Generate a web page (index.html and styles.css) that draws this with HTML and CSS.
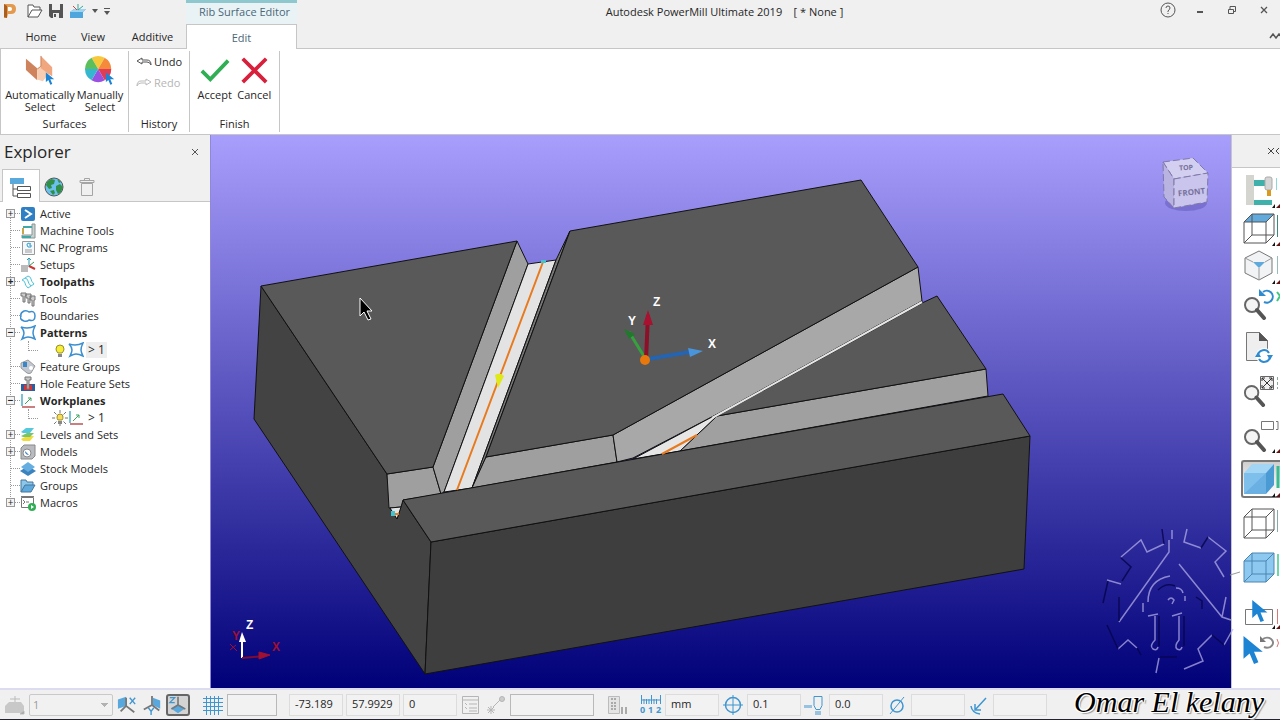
FILE: index.html
```html
<!DOCTYPE html>
<html lang="en">
  <head>
    <meta charset="UTF-8" />
    <meta name="viewport" content="width=device-width, initial-scale=1.0" />
    <title>Autodesk PowerMill Ultimate 2019</title>
    <link rel="stylesheet" href="styles.css">
  </head>

  <body>
    <svg width="0" height="0" class="defs" aria-hidden="true">
      <symbol id="pointer" viewBox="0 0 12 16">
        <path d="M0 0v13l3.500-3 2.500 6 2.500-1-2.500-6h5z" fill="#1d84d4" />
      </symbol>
      <symbol id="wire" viewBox="0 0 32 32">
        <path d="M1 10h22v21H1zM1 10l8-8h22l-8 8M31 2v21l-8 8M9 2v21h22M9 23l-8 8" fill="none" stroke="currentColor" />
      </symbol>
      <symbol id="lens" viewBox="0 0 24 24">
        <circle cx="9" cy="9" r="7" fill="#f4f4f4" stroke="#666" stroke-width="2" />
        <path d="M14 14l7 8" stroke="#555" stroke-width="4" stroke-linecap="round" />
      </symbol>
      <symbol id="star" viewBox="0 0 16 16">
        <path d="M1 2q3 1 6 1 4 0 8-2-2 4-2 7 0 2 2 6-4-2-7-2-2 0-6 2 2-4 2-6 0-3-3-6z" fill="#fff" stroke="#3b8fd0" stroke-width="1.500" />
      </symbol>
      <symbol id="plane" viewBox="0 0 16 16">
        <path d="M2 1v12" stroke="#4bb0c4" stroke-width="1.500" />
        <path d="M2 14h13" stroke="#b55" stroke-width="1.500" />
        <path d="M5 11l6-6M8 5h3v3" fill="none" stroke="#3aa35c" />
      </symbol>
      <symbol id="more" viewBox="0 0 8 4">
        <path d="M3 0v4H0z" fill="#111" />
        <path d="M8 0v4H4z" fill="#611" />
      </symbol>
    </svg>

    <header>
      <div class="titlebar">
        <div class="quick">
          <svg class="logo" viewBox="0 0 16 16"><path d="M2 1h7q5 0 5 5t-5 5H6l-1 4H2z" fill="#e39a4e" /><path d="M6 4h2q2 0 2 2T8 8H6z" fill="#fff" /><path d="M2 1l3 2v12l-3-1z" fill="#a95f20" /></svg>
          <button type="button" aria-label="Open"><svg width="16" height="16" viewBox="0 0 16 16" fill="#fff" stroke="#555"><path d="M1 14V2h5l1 2h6v3M1 14L5 7h10l-4 7z" /></svg></button>
          <button type="button" aria-label="Save"><svg width="16" height="16" viewBox="0 0 16 16"><path d="M1 1h14v14H3l-2-2z" fill="#555" /><path d="M4 1h8v6H4zM5 10h6v5H5z" fill="#eee" /><path d="M6 11h2v3H6z" fill="#555" /></svg></button>
          <button type="button" aria-label="Block"><svg width="18" height="16" viewBox="0 0 18 16"><path d="M1 9l4-3h12l-3 3v6H1z" fill="#4ea6dc" /><path d="M1 9h13l3-3H5z" fill="#9fd3f0" /><path d="M9 7V1M9 7l5-4" stroke="#3a9" /><path d="M4 3l4 4" stroke="#c44" /></svg></button>
          <svg width="6" height="4" viewBox="0 0 6 4"><path d="M0 0h6L3 4z" fill="#555" /></svg>
          <svg class="customize" width="6" height="7" viewBox="0 0 6 7"><path d="M0 0h6v1H0zM0 3h6L3 7z" fill="#555" /></svg>
        </div>
        <div class="context">Rib Surface Editor</div>
        <h1>Autodesk PowerMill Ultimate 2019 &nbsp;&nbsp; [ * None ]</h1>
        <div class="window-buttons">
          <button type="button" aria-label="Help"><svg width="16" height="16" viewBox="0 0 16 16"><circle cx="8" cy="8" r="7" fill="none" stroke="#555" /><path d="M6 6q0-2 2-2t2 2q0 1-2 3v1M8 11v1" fill="none" stroke="#555" /></svg></button>
          <button type="button" aria-label="Minimize"><svg width="8" height="8" viewBox="0 0 8 8"><path d="M1 6h6" stroke="#555" stroke-width="2" /></svg></button>
          <button type="button" aria-label="Restore"><svg width="8" height="8" viewBox="0 0 8 8" fill="none" stroke="#555"><path d="M.5 3.500h5v4h-5zM2 3V.5h5.500v5H6" /></svg></button>
          <button type="button" aria-label="Close"><svg width="8" height="8" viewBox="0 0 8 8"><path d="M1 1l6 6M7 1L1 7" stroke="#555" stroke-width="1.300" /></svg></button>
        </div>
      </div>
      <nav class="tabs">
        <button type="button">Home</button>
        <button type="button">View</button>
        <button type="button">Additive</button>
        <button type="button" class="active">Edit</button>
        <svg class="collapse" width="11" height="6" viewBox="0 0 11 6"><path d="M1 5l3-4 3 4 3-4 1 2" fill="none" stroke="#555" stroke-width="1.500" /></svg>
      </nav>
    </header>

    <section class="ribbon">
      <div class="group surfaces">
        <div class="commands">
          <button type="button">
            <svg viewBox="0 0 32 32"><path d="M1 4l12 10v13L1 16z" fill="#cf835c" /><path d="M13 15l5-4 11 5-10 12-6-2z" fill="#f6cdb2" /><path d="M17 1l12 12v10L17 14z" fill="#f0a67f" /><path d="M17 1v11l-4 3" fill="none" stroke="#c98058" /><use href="#pointer" x="22" y="18" width="10" height="14" /></svg>
            Automatically Select
          </button>
          <button type="button">
            <svg viewBox="0 0 32 32"><g transform="translate(14 15)"><path d="M0 0L-7-12A14 14 0 0 1 7-12z" fill="#f8c83c" /><path d="M0 0L7-12A14 14 0 0 1 14 0z" fill="#f58a3a" /><path d="M0 0h14A14 14 0 0 1 7 12z" fill="#e23c55" /><path d="M0 0l7 12A14 14 0 0 1-7 12z" fill="#9a50e0" /><path d="M0 0l-7 12A14 14 0 0 1-14 0z" fill="#35b8cf" /><path d="M0 0h-14A14 14 0 0 1-7-12z" fill="#5cbf5c" /></g><use href="#pointer" x="22" y="18" width="10" height="14" /></svg>
            Manually Select
          </button>
        </div>
        <h2>Surfaces</h2>
      </div>
      <div class="group history">
        <div class="commands">
          <button type="button"><svg viewBox="0 0 16 10"><path d="M1 4l5-3v2h5q4 0 4 5-1-3-4-3H6v2z" fill="#fff" stroke="#555" /></svg>Undo</button>
          <button type="button" disabled><svg viewBox="0 0 16 10"><path d="M15 4l-5-3v2H5Q1 3 1 8q1-3 4-3h5v2z" fill="#fff" stroke="#bbb" /></svg>Redo</button>
        </div>
        <h2>History</h2>
      </div>
      <div class="group finish">
        <div class="commands">
          <button type="button"><svg viewBox="0 0 32 32"><path d="M2 17l9 9L30 6" fill="none" stroke="#2fae54" stroke-width="4" /></svg>Accept</button>
          <button type="button"><svg viewBox="0 0 32 32"><path d="M4 4l25 25M29 4L4 29" stroke="#d8203c" stroke-width="4" /></svg>Cancel</button>
        </div>
        <h2>Finish</h2>
      </div>
    </section>

    <main>
      <aside class="explorer">
        <div class="explorer-head">
          <h2>Explorer</h2>
          <button type="button" aria-label="Close explorer"><svg width="8" height="8" viewBox="0 0 8 8"><path d="M1 1l6 6M7 1L1 7" stroke="#555" /></svg></button>
        </div>
        <div class="explorer-tabs">
          <button type="button" class="active" aria-label="Tree"><svg width="22" height="22" viewBox="0 0 22 22"><path d="M0 1h14v6H0z" fill="#5aa9dc" /><path d="M3 7v12h4M3 12h4M7.500 9.500h13v4h-13zM7.500 16.500h13v4h-13z" fill="none" stroke="#555" /></svg></button>
          <button type="button" aria-label="Web"><svg width="20" height="20" viewBox="0 0 20 20"><circle cx="10" cy="10" r="9" fill="#6cc0ee" stroke="#555" /><path d="M3 5l4-3 4 1-1 4-3 1 1 3-3 1-3-4zM12 9l4-2 3 3-2 5-3 2-2-4zM6 14l4-1 1 3-2 2zM13 2l4 3-2 1z" fill="#2f8f46" /></svg></button>
          <button type="button" aria-label="Recycle bin"><svg width="16" height="20" viewBox="0 0 16 20" fill="none" stroke="#a5a5a5"><path d="M2.500 6.500h11v12h-11zM1 3.500h14v2H1zM5.500 3V1.500h5V3" /></svg></button>
        </div>

        <ul class="tree">
          <li><button type="button" class="twig" aria-label="Expand">+</button>
            <svg viewBox="0 0 16 16"><rect x="1" y="1" width="14" height="14" rx="2" fill="#2f7fc4" /><path d="M5 4l6 4-6 4" fill="none" stroke="#fff" stroke-width="2" /></svg>Active</li>
          <li><svg viewBox="0 0 16 16"><path d="M12 1h3v14H2v-3h10z" fill="#c9d0d0" stroke="#8a9494" /><path d="M3 3h9v2H3z" fill="#3fa9a5" /><path d="M3 5v6" stroke="#c9a54a" stroke-width="2" /><path d="M2 13h9v2H2z" fill="#3fa9a5" /></svg>Machine Tools</li>
          <li><svg viewBox="0 0 16 16"><path d="M2.500 1.500h12v13h-12z" fill="#f4f8fa" stroke="#999" /><path d="M11 4q-4-2-4 1t4 2V5H9" fill="none" stroke="#2e9bd0" /><path d="M5 10h7M5 12h7" stroke="#999" /></svg>NC Programs</li>
          <li><svg viewBox="0 0 16 16"><path d="M1 8h7v7H1z" fill="#bbb" /><path d="M9 10V1M7 3l2-2 2 2" fill="none" stroke="#2e9bb0" /><path d="M9 9l5-4" stroke="#3a9a4a" /><path d="M9 9l6 3" stroke="#c33" stroke-width="2" /></svg>Setups</li>
          <li class="bold"><button type="button" class="twig" aria-label="Expand">+</button>
            <svg viewBox="0 0 16 16"><path d="M2 6q3 1 3 3t3 5M5 4q3 1 3 3t3 5M8 2q3 1 3 3t3 5M2 6l6-4M8 14l6-4" fill="none" stroke="#4cc4d8" /></svg>Toolpaths</li>
          <li><svg viewBox="0 0 16 16" fill="#ccc" stroke="#777"><path d="M1 2h5v3H5v6H3V5H1zM6 3h5v4h-1v5H8V7H6zM10 5h5v4h-1v6h-2V9h-2z" /></svg>Tools</li>
          <li><svg viewBox="0 0 16 16"><path d="M4 3q3-1 5 1 6-2 6 4t-6 4q-2 2-5 1-5-2-3-5-1-3 3-5z" fill="#fff" stroke="#3b8fd0" stroke-width="1.500" /></svg>Boundaries</li>
          <li class="bold"><button type="button" class="twig" aria-label="Collapse">−</button>
            <svg><use href="#star" /></svg>Patterns</li>
          <li class="child"><svg viewBox="0 0 16 16"><path d="M8 3q4 0 4 4 0 2-2 4H6Q4 9 4 7q0-4 4-4z" fill="#f7ee3a" stroke="#998d28" /><path d="M6 12h4v3H6z" fill="#888" /></svg><svg><use href="#star" /></svg><span class="current">&gt; 1</span></li>
          <li><svg viewBox="0 0 16 16"><path d="M1 4l7-3 7 6-4 7q-2 1-4 0L1 9z" fill="#c3c8d0" stroke="#999" /><path d="M3 3h4v5H3z" fill="#3c86c8" /><circle cx="11" cy="9" r="2" fill="#fff" /></svg>Feature Groups</li>
          <li><svg viewBox="0 0 16 16"><path d="M1 8h14v7H1z" fill="#2e5e9e" /><path d="M4 9h8v5H4z" fill="#d33" /><path d="M5 1h6v3H9v9H7V4H5z" fill="#c8c8c8" stroke="#777" /></svg>Hole Feature Sets</li>
          <li class="bold"><button type="button" class="twig" aria-label="Collapse">−</button>
            <svg><use href="#plane" /></svg>Workplanes</li>
          <li class="child"><svg viewBox="0 0 16 16"><path d="M8 0v16M0 8h16M2 2l12 12M14 2L2 14" stroke="#777" /><circle cx="8" cy="8" r="5" fill="#fff" /><path d="M8 4q3 0 3 3 0 2-1 3H6Q5 9 5 7q0-3 3-3z" fill="#f7dd5a" stroke="#998d28" /><path d="M6 11h4v3H6z" fill="#888" /></svg><svg><use href="#plane" /></svg><span class="current plain">&gt; 1</span></li>
          <li><button type="button" class="twig" aria-label="Expand">+</button>
            <svg viewBox="0 0 16 16"><path d="M1 12l6-3h7l-4 5H3z" fill="#f0dc3c" /><path d="M1 9l6-3h7l-4 4H3z" fill="#7cc46a" /><path d="M1 5l5-4h8l-4 5H3z" fill="#56c8dc" /></svg>Levels and Sets</li>
          <li><button type="button" class="twig" aria-label="Expand">+</button>
            <svg viewBox="0 0 16 16"><path d="M1 4l3-3h11v11l-3 3H1z" fill="#b8bcc0" stroke="#888" /><circle cx="7" cy="9" r="4" fill="#fff" stroke="#888" /><path d="M5 7q0 4 4 4z" fill="#3c86c8" /></svg>Models</li>
          <li><svg viewBox="0 0 16 16"><path d="M8 5l8 5-8 5-8-5z" fill="#3b83bf" /><path d="M8 1l7 5-7 5-7-5z" fill="#66aee0" /></svg>Stock Models</li>
          <li><svg viewBox="0 0 16 16"><path d="M1 14V2h5l1 2h6v3" fill="#8cc6ea" stroke="#46779c" /><path d="M1 14l4-7h10l-4 7z" fill="#5fa9dc" stroke="#46779c" /></svg>Groups</li>
          <li><button type="button" class="twig" aria-label="Expand">+</button>
            <svg viewBox="0 0 16 16"><path d="M1.500 2.500h12v10h-12zM1 1.500h13M3 5l2 2-2 2M6 7h3" fill="none" stroke="#777" /><circle cx="12" cy="12" r="4" fill="#2fae54" /><path d="M11 10l3 2-3 2z" fill="#fff" /></svg>Macros</li>
        </ul>
      </aside>

      <section class="viewport">
        <svg class="scene" viewBox="211 135 1020 553" preserveAspectRatio="xMidYMid slice">
          <g stroke="#111" stroke-linejoin="round">
            <!-- block sides -->
            <path d="M261 286L254 419 425 674 431 542 403 500 397 519 390 508 387 474z" fill="#434343" />
            <path d="M431 542L1030 436 1024 569 425 674z" fill="#3e3e3e" />
            <!-- rib walls and floors -->
            <path d="M387 474l46-7 8 27-38 6-2 7-12 1z" fill="#9f9f9f" />
            <path d="M517 241l11 23-84 228-3 2-8-27z" fill="#9f9f9f" />
            <path d="M528 264l28-4-84 228-28 4z" fill="#e3e3e3" />
            <path d="M570 231l-14 29-84 228 14-31z" fill="#777" />
            <path d="M486 457l127-22 4 27-145 26z" fill="#9f9f9f" />
            <path d="M613 435l305-168 4 34-195 108-94 49-16 4z" fill="#a8a8a8" />
            <path d="M717 416l269-47 2 27-308 55z" fill="#a0a0a0" />
            <path d="M922 303l15-7 49 73-269 47z" fill="#595959" />
            <path d="M633 459l94-50 195-108v2L717 416l-37 35z" fill="#e6e6e6" />
            <path d="M390 508l11-1-4 12z" fill="#e3e3e3" />
            <!-- top faces -->
            <path d="M261 286l256-45-84 226-46 7z" fill="#595959" />
            <path d="M570 231l291-51 57 87-305 168-127 22z" fill="#595959" />
            <path d="M403 500l600-106 27 42-599 106z" fill="#595959" />
          </g>
          <path d="M712 418L922 302" stroke="#e6e6e6" stroke-width="2" />
          <g stroke="#e87a1e" stroke-width="2">
            <path d="M543 262l-86 228M662 454l35-19M392 514h7" />
          </g>
          <path d="M541 260h5v3h-5zM391 511h4v5h-4z" fill="#3fc4d0" />
          <path d="M495 375q5-3 9 1l-6 12z" fill="#dfe818" />
          <!-- active workplane -->
          <path d="M645 358l-16-26" stroke="#35a23e" stroke-width="3" />
          <path d="M624 329l11 5-6 5z" fill="#1f7a2c" />
          <path d="M646 360l2-45" stroke="#8c1028" stroke-width="4" />
          <path d="M648 310l5 15h-10z" fill="#a81230" />
          <path d="M648 359l42-7" stroke="#2464b0" stroke-width="4" />
          <path d="M688 348l15 3-13 6z" fill="#4a94dc" />
          <circle cx="645" cy="360" r="5" fill="#e8780c" />
          <g class="axis-text">
            <text x="653" y="306">Z</text>
            <text x="628" y="325">Y</text>
            <text x="708" y="348">X</text>
          </g>
          <path d="M360 298v18l4-4 4 8 3-1-4-8h5z" fill="#000" stroke="#fff" />
        </svg>

        <svg class="triad" width="60" height="50" viewBox="0 0 60 50">
          <path d="M12 40V22" stroke="#fff" stroke-width="2" />
          <path d="M12 14l4 10H9z" fill="#fff" />
          <path d="M12 40l22-2" stroke="#7c0c34" stroke-width="2" />
          <path d="M29 34l11 3-11 4zM0 26l7 7M0 32l6-5" fill="#a01030" stroke="#a01030" />
          <text x="16" y="11" fill="#fff">Z</text>
          <text x="2" y="22" fill="#a01030">Y</text>
          <text x="42" y="33" fill="#a01030">X</text>
        </svg>

        <svg class="cube" width="56" height="60" viewBox="0 0 56 60">
          <ellipse cx="27" cy="48" rx="21" ry="8" fill="#4b3fa0" opacity=".35" />
          <g stroke="#807aa8" stroke-dasharray="7 3">
            <path d="M4 7l30-4 15 15-34 6z" fill="#d2cff0" />
            <path d="M4 7l11 17v29L5 42z" fill="#b9b3e2" />
            <path d="M15 24l34-6-1 29-33 6z" fill="#c9c5ec" />
          </g>
          <text class="top" x="20" y="15" transform="rotate(-4 28 12)">TOP</text>
          <text x="19" y="40" transform="rotate(-6 32 38)">FRONT</text>
        </svg>
      </section>

      <aside class="toolbar">
        <div class="toolbar-head"><svg width="12" height="8" viewBox="0 0 12 8"><path d="M0 1l6 6M6 1L0 7M11 1L8 4l3 3" fill="none" stroke="#444" /></svg></div>
        <div class="tools">
          <button type="button" class="short" aria-label="Machine"><svg viewBox="0 0 37 36"><path d="M3 3h8v30H3z" fill="#d5d5d0" /><path d="M11 8h12v6H11zM11 28h18v5H11z" fill="#3fb0aa" /><rect x="22" y="5" width="7" height="13" rx="2" fill="#d5d5d5" stroke="#aaa" /><path d="M24 18h4v6h-4z" fill="#d99a22" /><path d="M33.500 6v12" stroke="#8ed8d8" /><use href="#more" x="29" y="32" width="8" height="4" /></svg></button>
          <button type="button" class="short" aria-label="View from top"><svg viewBox="0 0 37 36"><path d="M1 12l8-8h22l-8 8z" fill="#62aadc" /><g color="#555"><use href="#wire" y="2" width="32" height="32" /></g><path d="M34.500 5v22" stroke="#3a8a84" /><use href="#more" x="29" y="32" width="8" height="4" /></svg></button>
          <button type="button" class="short" aria-label="Isometric view"><svg viewBox="0 0 37 36"><path d="M16 3l13 7v15l-13 7-14-7V10z" fill="#f1f3f5" stroke="#777" /><path d="M2 10l8 4M29 10l-7 4M16 20v12" stroke="#999" /><path d="M10 14h12l-6 6z" fill="#5fa9dc" /><path d="M34.500 8v18" stroke="#9bb" /><use href="#more" x="29" y="32" width="8" height="4" /></svg></button>
          <button type="button" class="short" aria-label="Previous zoom"><svg viewBox="0 0 37 36"><use href="#lens" x="0" y="10" width="24" height="24" /><path d="M20 6a6 6 0 1 1 1 10" fill="none" stroke="#2e8bd0" stroke-width="2" /><path d="M16 3v7h7z" fill="#2e8bd0" /><path d="M34 6l3 4-3 5" fill="none" stroke="#3dc880" stroke-width="2" /></svg></button>
          <div class="spacer"></div>
          <button type="button" aria-label="Refresh"><svg viewBox="0 0 37 36"><path d="M3.500 3.500h13l8 8v20h-21z" fill="#eee" stroke="#777" /><path d="M16 3v9h9z" fill="#555" /><circle cx="21" cy="27" r="8" fill="#fff" /><path d="M15 26a6 6 0 0 1 11-2M27 28a6 6 0 0 1-11 2" fill="none" stroke="#2e8bd0" stroke-width="2" /><path d="M12 28h6l-3-5zM24 26h6l-3 5z" fill="#2e8bd0" /></svg></button>
          <button type="button" aria-label="Zoom to fit"><svg viewBox="0 0 37 36"><use href="#lens" x="0" y="11" width="23" height="23" /><path d="M17.500 3.500h13v13h-13z" fill="#eee" stroke="#666" /><path d="M19 5l10 10M29 5L19 15M19 8V5h3M26 5h3v3M29 12v3h-3M22 15h-3v-3" fill="none" stroke="#333" /><path d="M34.500 4v12" stroke="#8a9" stroke-dasharray="3 2" /></svg></button>
          <button type="button" aria-label="Zoom box"><svg viewBox="0 0 37 36"><use href="#lens" x="0" y="11" width="24" height="24" /><path d="M18.500 4.500h12v8h-12zM33 4.500h2v8h-2" fill="#fff" stroke="#777" /><use href="#more" x="29" y="32" width="8" height="4" /></svg></button>
          <button type="button" class="pressed" aria-label="Plain shading"><svg viewBox="0 0 37 36"><path d="M1 12h22v21H1z" fill="#7fbfeb" /><path d="M1 12l8-9h22l-8 9z" fill="#a3d5f5" /><path d="M31 3v21l-8 9V12z" fill="#4a9ad4" /><path d="M1 33l22-21v21z" fill="#6ab0e2" /><path d="M35 5v22" stroke="#35bd91" stroke-width="3" /><use href="#more" x="29" y="32" width="8" height="4" /></svg></button>
          <button type="button" aria-label="Wireframe"><svg viewBox="0 0 37 36"><g color="#555"><use href="#wire" y="2" width="32" height="32" /></g><path d="M34.500 5v22" stroke="#8aa" /></svg></button>
          <button type="button" aria-label="Transparent"><svg viewBox="0 0 37 36"><path d="M1 12l8-8h22v21l-8 8H1z" fill="#8cc8f0" /><g color="#4a86b0"><use href="#wire" y="2" width="32" height="32" /></g><path d="M35 5v22" stroke="#6ad8a8" stroke-width="2" /></svg></button>
          <button type="button" aria-label="Select by box"><svg viewBox="0 0 37 36"><path d="M2.500 16.500h27v15h-27z" fill="none" stroke="#777" /><use href="#pointer" x="9" y="7" width="17" height="22" /><path d="M34.500 16v15" stroke="#d77" /><use href="#more" x="29" y="32" width="8" height="4" /></svg></button>
          <button type="button" class="short" aria-label="Previous selection"><svg viewBox="0 0 37 36"><use href="#pointer" x="0" y="2" width="22" height="28" /><path d="M20 5a6 5 0 1 1 1 8" fill="none" stroke="#888" stroke-width="2" /><path d="M17 2v6h6z" fill="#777" /><path d="M34 5q3 4 0 8" fill="none" stroke="#d77" /></svg></button>
        </div>
      </aside>
    </main>

    <footer>
      <svg class="wide" viewBox="0 0 22 22"><path d="M1 12l4-4h12l3 4v7H1z" fill="#c8c8c8" /><path d="M11 8V2M6 5h10M20 17v3h-4z" stroke="#bbb" fill="#999" /></svg>
      <select disabled aria-label="Active workplane"><option>1</option></select>
      <button type="button" aria-label="X plane"><svg viewBox="0 0 22 22"><path d="M1 5l9-3v10l-9 3z" fill="#58a8de" /><path d="M10 3v9l9 7M10 12l-6 6" fill="none" stroke="#777" stroke-width="2" /><path d="M14 3l6 7M20 3l-6 7" stroke="#3f96d0" stroke-width="1.500" /></svg></button>
      <button type="button" aria-label="Y plane"><svg viewBox="0 0 22 22"><path d="M12 3l8 3v9l-8-4z" fill="#58a8de" /><path d="M11 1v10l-9 5M11 11l8 6" fill="none" stroke="#777" stroke-width="2" /><path d="M7 14l3 4 3-4M10 18v4" fill="none" stroke="#3f96d0" stroke-width="1.500" /></svg></button>
      <button type="button" class="pressed" aria-label="Z plane"><svg viewBox="0 0 22 22"><path d="M11 10l9 5-9 6-9-6z" fill="#58a8de" /><path d="M11 1v10l9 5M11 11l-8 5" fill="none" stroke="#777" stroke-width="2" /><path d="M1 2h6L1 8h6" fill="none" stroke="#3f96d0" stroke-width="1.500" /></svg></button>
      <svg class="wide grid-icon" viewBox="0 0 22 22"><path d="M1 4.500h20M1 8.500h20M1 12.500h20M1 16.500h20M4.500 2v19M8.500 2v19M12.500 2v19M16.500 2v19" stroke="#3f96d0" /></svg>
      <input type="text" class="w50" aria-label="Grid size" />
      <output class="readout first">-73.189</output>
      <output class="readout">57.9929</output>
      <output class="readout">0</output>
      <svg class="wide" viewBox="0 0 22 22" fill="none" stroke="#b5b5b5"><path d="M2.500 2.500h16v17h-16zM2 6h17M5 9l2 2M5 13l2 2M9 10h8M9 14h8M9 17h8" /></svg>
      <svg class="wide" viewBox="0 0 22 22" fill="none" stroke="#b5b5b5"><path d="M8 13l7-7M2 16h8M6 12v8M3 13l6 6M9 13l-6 6" /><circle cx="17" cy="5" r="2.500" fill="#ccc" /></svg>
      <input type="text" class="w84" aria-label="Coordinates" />
      <svg class="wide calc" viewBox="0 0 22 22"><path d="M2.500 2.500h11v17h-11z" fill="#e4e4e4" stroke="#bbb" /><path d="M5 5h6M5 9h6M5 12h6M5 15h6" stroke="#aaa" stroke-dasharray="2 1" stroke-width="2" /><path d="M15 13h2v7h-2zM19 13h2v7h-2z" fill="#aaa" /></svg>
      <svg class="wide ruler" viewBox="0 0 22 22"><path d="M1.500 1v9M11.500 1v9M20.500 1v9M4 5v5M6.500 5v5M9 5v5M14 5v5M16.500 5v5M1 6h20" stroke="#3f96d0" /><text x="0" y="19">0</text><text x="8" y="19">1</text><text x="16" y="19">2</text></svg>
      <output class="readout">mm</output>
      <svg class="wide" viewBox="0 0 22 22" fill="none" stroke="#3f96d0"><circle cx="11" cy="11" r="7.500" stroke-width="1.500" /><path d="M1 11h20M11 1v20" /></svg>
      <output class="readout">0.1</output>
      <svg class="wide" viewBox="0 0 22 22" fill="none" stroke="#3f96d0"><path d="M10 2.500h8v9l-2 4h-4l-2-4zM12 17v4M14 17v4M16 17v4M1 11v3M3 11v3M5 11v3M7 11v3" /></svg>
      <output class="readout">0.0</output>
      <svg class="wide" viewBox="0 0 22 22" fill="none" stroke="#3f96d0"><circle cx="11" cy="12" r="6" stroke-width="1.500" /><path d="M4 20L18 3" /></svg>
      <output class="readout"></output>
      <svg class="wide" viewBox="0 0 22 22" fill="none" stroke="#3f96d0"><path d="M18 4L7 16M7 10v6h6M3 12q1 7 9 8" stroke-width="1.500" /></svg>
      <output class="readout"></output>
    </footer>

    <svg class="watermark" width="142" height="150" viewBox="1100 525 142 150" fill="none">
      <g stroke="#b9b4ee" stroke-width="1.500" opacity=".7">
        <path d="M1121 557l20-17 6 12 17-8M1172 530v9M1187 529l-3 13 17 6M1208 537l18 14-11 11 9 15M1107 580l14 4M1169 540v12l-50 70M1179 564l43 53 9 3M1226 597l-4 20M1148 602q0-22 22-26M1143 603v9M1176 588q6 0 7 5M1118 649l10-9 9 8M1159 658l-3 15M1184 669l19-8-5-12 14-14" />
        <path d="M1148 616l10-2M1155 616v24q-6 6-2 9 4 2 5-2M1172 616l10-3M1179 616v24q-5 6-2 9 4 2 5-2M1224 645l9-16" />
        <path d="M1185 596v5M1168 600q3-4 6 0l-2 4" />
      </g>
      <g stroke="#05044a" stroke-width="1.500" opacity=".8">
        <path d="M1121 558l10 9-9 14M1103 603l5-22M1107 625l11 24M1119 597v24M1201 548l7-11M1212 635l12 10M1164 544l-2-15M1137 648l4 7M1160 657h17M1158 590q8-8 17-4M1159 616v30M1184 616v30M1196 597l6 4v8" />
      </g>
      <path d="M1230 575l10-3" stroke="#999" />
    </svg>
    <div class="signature">Omar El kelany</div>
  </body>
</html>
```
FILE: styles.css
```css
:root {
  --panel: #f0f0f0;
  --line: #c6c6c6;
  --text: #262626;
  --blue: #3f96d0;
}

* {
  box-sizing: border-box;
  margin: 0;
  padding: 0;
}

body {
  background-color: white;
  color: var(--text);
  display: flex;
  flex-direction: column;
  font-family: "Open Sans", "Noto Sans", sans-serif;
  font-size: 11px;
  height: 100vh;
  line-height: 12px;
  overflow: hidden;
  position: relative;
}

svg {
  display: block;
  flex: none;
}

.defs {
  position: absolute;
}

button {
  background: none;
  border: none;
  color: inherit;
  font: inherit;
}

h1,
h2 {
  font-size: 11px;
  font-weight: normal;
}

/* title bar and tabs */
header {
  background-color: var(--panel);
  flex: none;
}

.titlebar {
  align-items: center;
  display: flex;
  height: 24px;
}

.quick {
  align-items: center;
  display: flex;
  gap: 5px;
  padding: 0 0 2px 2px;
  width: 186px;
}

.logo {
  height: 16px;
  margin-right: 4px;
  width: 16px;
}

.customize {
  margin-left: 1px;
}

.context {
  background-color: #e9f3f5;
  border-top: 3px solid #8ec8ce;
  color: #49687a;
  height: 24px;
  line-height: 17px;
  padding-left: 6px;
  text-align: center;
  width: 111px;
}

h1 {
  flex: 1;
  padding-right: 8px;
  text-align: center;
}

.window-buttons {
  align-items: center;
  display: flex;
  gap: 16px;
  padding: 0 8px 4px 0;
}

.window-buttons button {
  display: flex;
  justify-content: center;
  min-width: 16px;
}

.tabs {
  border-bottom: 1px solid var(--line);
  display: flex;
  height: 25px;
  padding-left: 15px;
}

.tabs button {
  padding-top: 1px;
  width: 52px;
}

.tabs button:nth-child(3) {
  width: 67px;
}

.tabs .active {
  background-color: white;
  border: 1px solid var(--line);
  border-bottom: none;
  color: #49687a;
  height: 25px;
  width: 111px;
}

.collapse {
  margin: 9px 0 0 auto;
}

/* ribbon */
.ribbon {
  background-color: white;
  border-bottom: 1px solid var(--line);
  border-left: 1px solid var(--line);
  display: flex;
  flex: none;
  height: 86px;
  padding: 2px 0;
}

.group {
  border-right: 1px solid var(--line);
  display: flex;
  flex-direction: column;
  justify-content: space-between;
}

.group h2 {
  line-height: 16px;
  text-align: center;
}

.commands {
  display: flex;
}

.surfaces {
  padding-left: 4px;
  width: 128px;
}

.surfaces h2 {
  padding-right: 4px;
}

.commands button {
  align-items: center;
  display: flex;
  flex-direction: column;
  gap: 4px;
  padding-top: 4px;
}

.surfaces button {
  width: 70px;
}

.surfaces button + button {
  width: 50px;
}

.commands svg {
  height: 30px;
  width: 30px;
}

.history {
  width: 61px;
}

.history .commands {
  flex-direction: column;
  gap: 3px;
  padding-left: 7px;
}

.history .commands button {
  flex-direction: row;
  gap: 2px;
  height: 18px;
}

.history button:disabled {
  color: #b5b5b5;
}

.history svg {
  height: 10px;
  width: 16px;
}

.finish {
  padding: 0 5px;
  width: 90px;
}

.finish button {
  width: 40px;
}

/* main area */
main {
  display: flex;
  flex: 1;
  min-height: 0;
}

.explorer {
  background-color: white;
  border-right: 1px solid #8f88d8;
  width: 211px;
}

.explorer-head {
  align-items: center;
  background-color: var(--panel);
  display: flex;
  height: 34px;
  justify-content: space-between;
  padding: 0 11px 0 4px;
}

.explorer-head h2 {
  font-size: 17px;
  line-height: 24px;
}

.explorer-tabs {
  background-color: var(--panel);
  border-bottom: 1px solid var(--line);
  display: flex;
  height: 33px;
  padding-left: 2px;
}

.explorer-tabs button {
  align-items: center;
  display: flex;
  height: 33px;
  justify-content: center;
  padding-top: 3px;
  width: 28px;
}

.explorer-tabs .active {
  background-color: white;
  border: 1px solid var(--line);
  border-bottom: none;
  width: 38px;
}

.explorer-tabs button:last-child {
  margin-left: 5px;
}

.tree {
  list-style: none;
  padding-top: 3px;
  position: relative;
}

.tree::before {
  border-left: 1px dotted #999;
  bottom: 8px;
  content: "";
  left: 10px;
  position: absolute;
  top: 12px;
}

.tree li {
  align-items: center;
  display: flex;
  gap: 4px;
  height: 17px;
  padding-left: 20px;
  position: relative;
}

.tree li::before {
  border-top: 1px dotted #999;
  content: "";
  left: 11px;
  position: absolute;
  top: 8px;
  width: 9px;
}

.tree svg {
  height: 16px;
  width: 16px;
}

.twig {
  background-color: #f4f4f4;
  border: 1px solid #999;
  font-size: 10px;
  height: 9px;
  left: 6px;
  line-height: 7px;
  position: absolute;
  top: 4px;
  width: 9px;
}

.bold {
  font-weight: bold;
}

.tree .child {
  gap: 0;
  padding-left: 52px;
}

.tree .child::before {
  border-left: 1px dotted #999;
  border-top: none;
  border-bottom: 1px dotted #999;
  height: 9px;
  left: 28px;
  top: 0;
}

.current {
  background-color: #eee;
  font-size: 12px;
  line-height: 16px;
  margin-left: 2px;
  padding: 0 2px;
}

.current.plain {
  background: none;
}

.viewport {
  background: linear-gradient(#a89efc, #000078);
  flex: 1;
  min-width: 0;
  position: relative;
}

.scene {
  height: 100%;
  width: 100%;
}

.axis-text {
  fill: white;
  font-family: "Liberation Sans", sans-serif;
  font-size: 12px;
  font-weight: bold;
}

.triad {
  bottom: 20px;
  font-family: "Liberation Sans", sans-serif;
  font-size: 12px;
  font-weight: bold;
  left: 19px;
  position: absolute;
}

.cube {
  fill: #77719c;
  font-size: 8px;
  font-weight: bold;
  position: absolute;
  right: 16px;
  top: 20px;
}

.cube .top {
  font-size: 7px;
}

.toolbar {
  background-color: white;
  border-left: 1px solid var(--line);
  overflow: hidden;
  width: 49px;
}

.toolbar-head {
  align-items: center;
  background-color: var(--panel);
  border-bottom: 1px solid var(--line);
  display: flex;
  height: 33px;
  justify-content: flex-end;
}

.tools {
  display: flex;
  flex-direction: column;
  padding: 3px 0 0 9px;
}

.tools button {
  align-items: center;
  display: flex;
  height: 44px;
  padding-left: 2px;
}

.tools .short {
  height: 38px;
}

.tools svg {
  height: 36px;
  width: 37px;
}

.tools .pressed {
  background: linear-gradient(#cfcfcf, white);
  border: 2px solid #777;
  border-radius: 3px 0 0 3px;
  border-right: none;
  height: 38px;
  margin: 3px 0;
  padding-left: 0;
}

.spacer {
  height: 2px;
}

/* status bar */
footer {
  align-items: center;
  background-color: var(--panel);
  border-bottom: 1px solid #223;
  border-top: 2px solid #dcdcf0;
  display: flex;
  flex: none;
  gap: 3px;
  height: 32px;
  padding-left: 4px;
}

footer button {
  border: 1px solid transparent;
  width: 22px;
}

footer .pressed {
  background-color: #d4d4d4;
  border: 2px solid #666;
  border-radius: 3px;
  height: 22px;
  width: 24px;
}

footer button svg {
  height: 20px;
  width: 20px;
}

footer .pressed svg {
  height: 18px;
}

footer .wide {
  height: 22px;
  width: 22px;
}

footer select,
footer input,
.readout {
  background-color: #f2f2f2;
  border: 1px solid #b9b9b9;
  font: inherit;
  height: 22px;
}

footer select {
  appearance: none;
  background-image: conic-gradient(from -45deg at 50% 100%, #999 90deg, transparent 0);
  background-position: right 4px center;
  background-repeat: no-repeat;
  background-size: 7px 4px;
  border-radius: 2px;
  color: #777;
  padding-left: 3px;
  width: 84px;
}

.readout {
  border-color: #dcdcdc;
  line-height: 18px;
  padding-left: 5px;
  width: 54px;
}

.w50 {
  width: 50px;
}

.w84 {
  width: 84px;
}

.first,
.grid-icon,
.calc,
.ruler {
  margin-left: 9px;
}

.ruler {
  fill: var(--blue);
  font-size: 9px;
  font-weight: bold;
  overflow: visible;
}

/* overlays */
.watermark {
  bottom: 45px;
  pointer-events: none;
  position: absolute;
  right: 38px;
}

.signature {
  bottom: 2px;
  color: black;
  font-family: "Liberation Serif", cursive;
  font-size: 30px;
  font-style: italic;
  line-height: 32px;
  position: absolute;
  right: 16px;
  text-shadow: 1px 1px 0 white, -1px -1px 0 white, 1px -1px 0 white, -1px 1px 0 white, 2px 2px 1px #999;
}
```
